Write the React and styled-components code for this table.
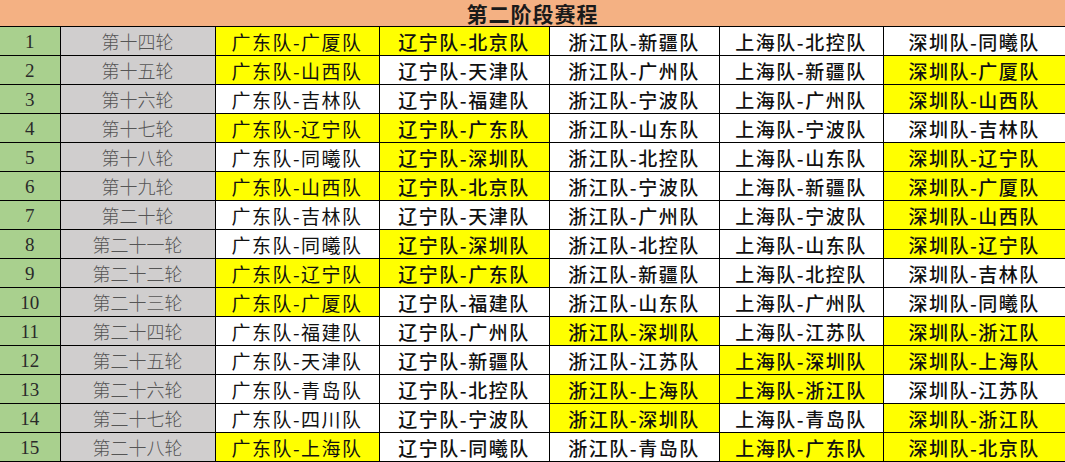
import React from "react";
import styled, { createGlobalStyle } from "styled-components";

const GlobalStyle = createGlobalStyle`
  html, body {
    margin: 0;
    padding: 0;
    background: #ffffff;
  }
`;

const rounds = [
  "第十四轮", "第十五轮", "第十六轮", "第十七轮", "第十八轮",
  "第十九轮", "第二十轮", "第二十一轮", "第二十二轮", "第二十三轮",
  "第二十四轮", "第二十五轮", "第二十六轮", "第二十七轮", "第二十八轮",
];

// "*" marks a highlighted cell
const matches = [
  ["*广东队-广厦队", "*辽宁队-北京队", "浙江队-新疆队", "上海队-北控队", "深圳队-同曦队"],
  ["*广东队-山西队", "辽宁队-天津队", "浙江队-广州队", "上海队-新疆队", "*深圳队-广厦队"],
  ["广东队-吉林队", "辽宁队-福建队", "浙江队-宁波队", "上海队-广州队", "*深圳队-山西队"],
  ["*广东队-辽宁队", "*辽宁队-广东队", "浙江队-山东队", "上海队-宁波队", "深圳队-吉林队"],
  ["广东队-同曦队", "*辽宁队-深圳队", "浙江队-北控队", "上海队-山东队", "*深圳队-辽宁队"],
  ["*广东队-山西队", "*辽宁队-北京队", "浙江队-宁波队", "上海队-新疆队", "*深圳队-广厦队"],
  ["广东队-吉林队", "辽宁队-天津队", "浙江队-广州队", "上海队-宁波队", "*深圳队-山西队"],
  ["广东队-同曦队", "*辽宁队-深圳队", "浙江队-北控队", "上海队-山东队", "*深圳队-辽宁队"],
  ["*广东队-辽宁队", "*辽宁队-广东队", "浙江队-新疆队", "上海队-北控队", "深圳队-吉林队"],
  ["*广东队-广厦队", "辽宁队-福建队", "浙江队-山东队", "上海队-广州队", "深圳队-同曦队"],
  ["广东队-福建队", "辽宁队-广州队", "*浙江队-深圳队", "上海队-江苏队", "*深圳队-浙江队"],
  ["广东队-天津队", "辽宁队-新疆队", "浙江队-江苏队", "*上海队-深圳队", "*深圳队-上海队"],
  ["广东队-青岛队", "辽宁队-北控队", "*浙江队-上海队", "*上海队-浙江队", "深圳队-江苏队"],
  ["广东队-四川队", "辽宁队-宁波队", "*浙江队-深圳队", "上海队-青岛队", "*深圳队-浙江队"],
  ["*广东队-上海队", "辽宁队-同曦队", "浙江队-青岛队", "*上海队-广东队", "*深圳队-北京队"],
];

const colWidths = [60, 155, 164, 170, 170, 164, 182];

function App() {
  return (
    <>
      <GlobalStyle />
      <Sheet>
        <colgroup>
          {colWidths.map((w, i) => (
            <col key={i} style={{ width: w }} />
          ))}
        </colgroup>
        <thead>
          <tr>
            <TitleCell colSpan={7}>第二阶段赛程</TitleCell>
          </tr>
        </thead>
        <tbody>
          {matches.map((row, r) => (
            <Row key={r}>
              <IndexCell>{r + 1}</IndexCell>
              <RoundCell>{rounds[r]}</RoundCell>
              {row.map((m, c) => (
                <MatchCell key={c} $hl={m.startsWith("*")} $bold={c > 0}>
                  {m.replace("*", "")}
                </MatchCell>
              ))}
            </Row>
          ))}
        </tbody>
      </Sheet>
    </>
  );
}

const Sheet = styled.table`
  width: 1065px;
  table-layout: fixed;
  border-collapse: collapse;
  font-family: "Liberation Serif", "Noto Sans CJK SC", serif;
`;

const TitleCell = styled.th`
  height: 26px;
  padding: 0;
  background-color: #f4b183;
  border-bottom: 1px solid #000;
  font-family: "Noto Sans CJK SC", sans-serif;
  font-size: 21px;
  font-weight: 700;
  letter-spacing: 1px;
  color: #1a1a1a;
  text-align: center;
  line-height: 26px;
`;

const Row = styled.tr`
  height: 29px;
`;

const Cell = styled.td`
  padding: 0;
  border: 1px solid #000;
  text-align: center;
  vertical-align: middle;
  white-space: nowrap;
  overflow: hidden;
  font-size: 18px;
  line-height: 27px;
`;

const IndexCell = styled(Cell)`
  border-left: none;
  background-color: #a9d08e;
  color: #2a2a2a;
  font-family: "Liberation Serif", serif;
  font-size: 19px;
`;

const RoundCell = styled(Cell)`
  background-color: #d0cece;
  color: #555;
  font-family: "Noto Sans CJK SC", sans-serif;
  font-weight: 300;
  font-size: 18px;
`;

const MatchCell = styled(Cell)`
  background-color: ${(props) => (props.$hl ? "#ffff00" : "#ffffff")};
  color: #111;
  font-family: "Noto Sans CJK SC", sans-serif;
  font-size: 19px;
  letter-spacing: 1.5px;
  font-weight: ${(props) => (props.$bold ? 500 : 400)};
`;

export default App;
